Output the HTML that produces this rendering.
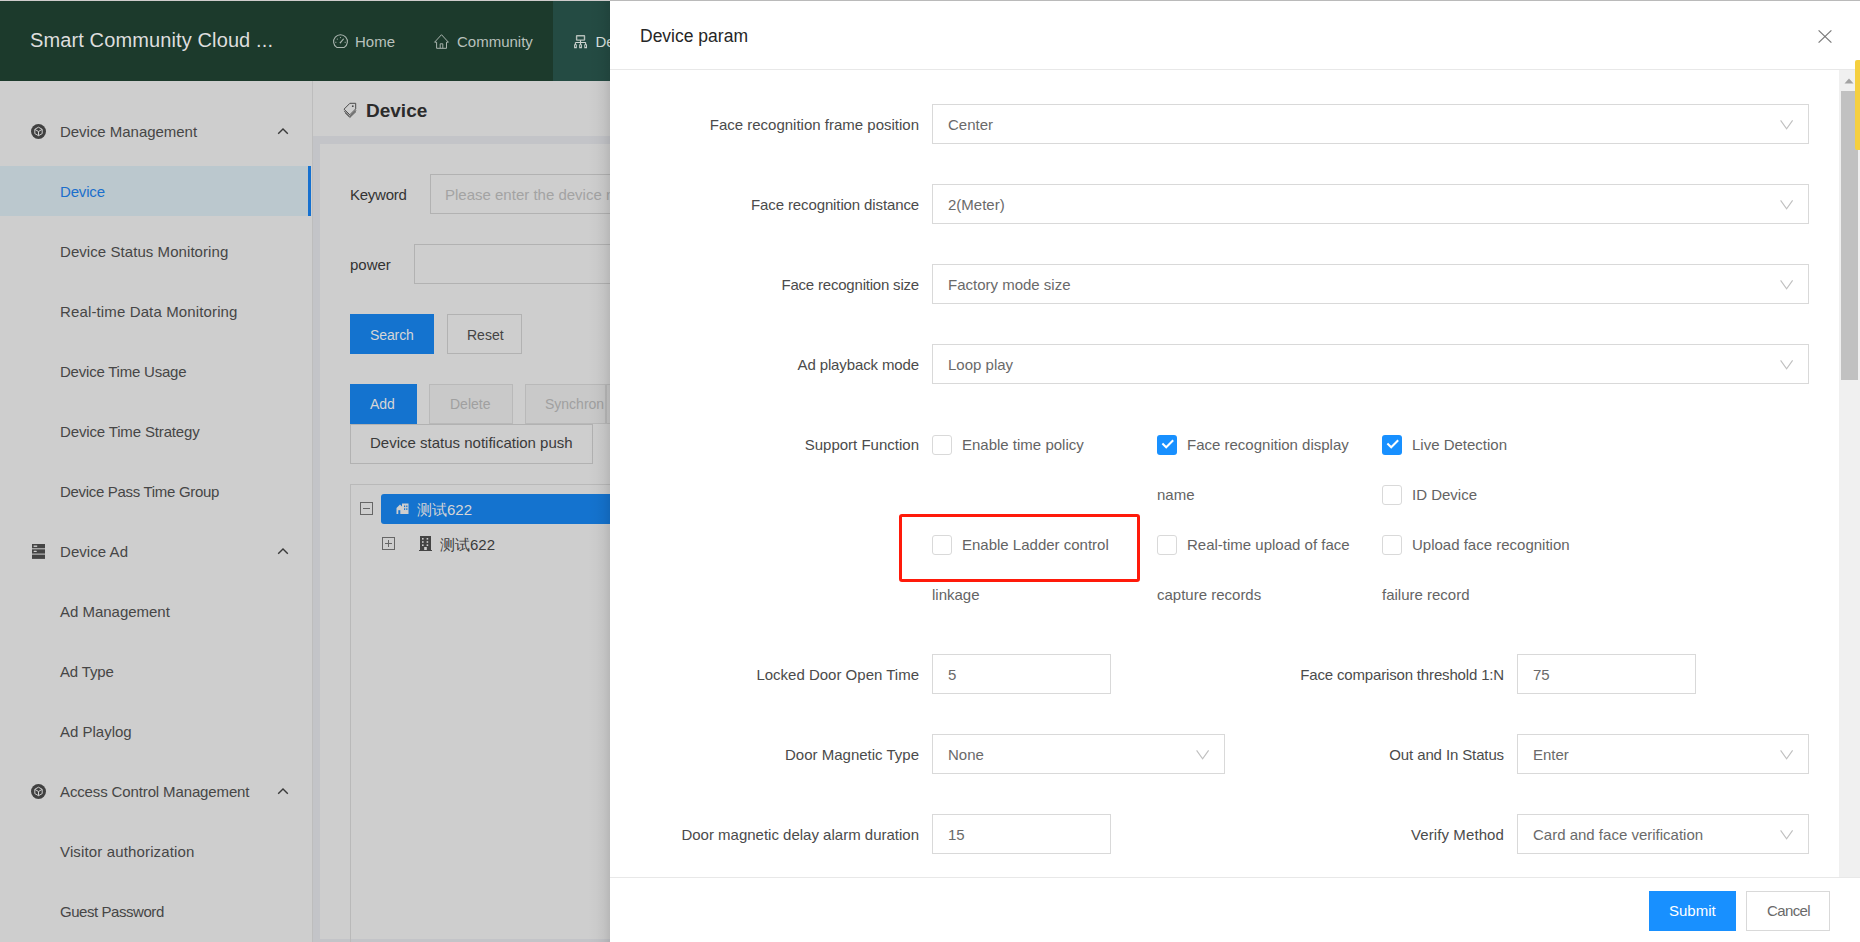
<!DOCTYPE html>
<html><head><meta charset="utf-8">
<style>
*{box-sizing:border-box;margin:0;padding:0}
html,body{width:1860px;height:942px;overflow:hidden;background:#cecece;font-family:"Liberation Sans",sans-serif;position:relative;-webkit-font-smoothing:antialiased}
.a{position:absolute}
.t{position:absolute;white-space:nowrap;line-height:1}
svg{position:absolute;overflow:visible}
</style></head><body>
<div class="a" style="left:0px;top:0px;width:610px;height:81px;background:#1c3a2c"></div>
<div class="a" style="left:553px;top:0px;width:57px;height:81px;background:#244b43"></div>
<div class="t" style="left:30px;top:29.50px;font-size:20px;color:#dedede;font-weight:normal;letter-spacing:0.12px">Smart Community Cloud ...</div>
<div class="t" style="left:355px;top:34.00px;font-size:15px;color:#b9c1bd;font-weight:normal;">Home</div>
<div class="t" style="left:457px;top:34.00px;font-size:15px;color:#b9c1bd;font-weight:normal;">Community</div>
<div class="t" style="left:595.5px;top:34.00px;font-size:15px;color:#d9e1df;font-weight:normal;">De</div>
<svg style="left:333px;top:34px" width="15" height="15" viewBox="0 0 15 15">
<path d="M3.76 13.4 A6.9 6.9 0 1 1 11.24 13.4 Z" fill="none" stroke="#aab5af" stroke-width="1.05"/>
<path d="M7.4 8.6 L10.4 5.1" stroke="#aab5af" stroke-width="1.1" stroke-linecap="round"/>
<circle cx="7.4" cy="8.6" r="0.8" fill="#aab5af"/>
<circle cx="7.5" cy="3.6" r="0.6" fill="#aab5af"/><circle cx="4.3" cy="5.1" r="0.6" fill="#aab5af"/>
<path d="M2.2 8.3 H3.4 M11.6 8.3 H12.8" stroke="#aab5af" stroke-width="0.9"/>
</svg>
<svg style="left:428px;top:28px" width="30" height="24" viewBox="0 0 30 24">
<path d="M8.6 14.2 H6.6 L13.5 6.7 L20.4 14.2 H18.5 V20.3 H8.6 Z" fill="none" stroke="#aab5af" stroke-width="1" stroke-linejoin="miter"/>
<path d="M12.2 20.3 V15.8 H14.8 V20.3" fill="none" stroke="#aab5af" stroke-width="0.95"/>
</svg>
<svg style="left:568px;top:28px" width="30" height="24" viewBox="0 0 30 24">
<rect x="8.6" y="7.7" width="7.9" height="4.4" rx="0.3" fill="none" stroke="#b4bfb9" stroke-width="1.4"/>
<path d="M12.5 12.2 V16.2 M7.4 14.5 H17.8" stroke="#d0d6d2" stroke-width="1.1" fill="none"/>
<path d="M6.6 19.6 V17 Q7.4 15.6 8.3 17 V19.6 Z M11.7 19.6 V17 Q12.5 15.6 13.4 17 V19.6 Z M16.8 19.6 V17 Q17.6 15.6 18.5 17 V19.6 Z" fill="none" stroke="#c8cfcb" stroke-width="1.05"/>
<path d="M7.4 14.5 V16.2 M17.6 14.5 V16.2" stroke="#d0d6d2" stroke-width="1.1"/>
</svg>
<div class="a" style="left:0px;top:81px;width:312px;height:861px;background:#cecece"></div>
<div class="a" style="left:312px;top:81px;width:1px;height:861px;background:#bdbdbd"></div>
<div class="a" style="left:0px;top:166px;width:308px;height:50px;background:#bbc8ce"></div>
<div class="a" style="left:308px;top:166px;width:3px;height:50px;background:#1470d0"></div>
<div class="t" style="left:60px;top:124.00px;font-size:15px;color:#464646;font-weight:normal;letter-spacing:-0.031px">Device Management</div>
<svg style="left:277px;top:127px" width="12" height="8" viewBox="0 0 12 8"><path d="M1.2 6.8 L6 2 L10.8 6.8" fill="none" stroke="#3a3a3a" stroke-width="1.4"/></svg>
<svg style="left:31px;top:123.5px" width="15" height="15" viewBox="0 0 15 15">
<circle cx="7.5" cy="7.5" r="7.5" fill="#404040"/>
<path d="M7.5 3.2 L11.2 5.3 V9.6 L7.5 11.7 L3.8 9.6 V5.3 Z" fill="none" stroke="#cecece" stroke-width="1"/>
<path d="M3.9 5.4 L7.5 7.5 L11.1 5.4 M7.5 7.5 V11.6" fill="none" stroke="#cecece" stroke-width="1"/>
</svg>
<div class="t" style="left:60px;top:184.00px;font-size:15px;color:#1a6fcc;font-weight:normal;letter-spacing:-0.16px">Device</div>
<div class="t" style="left:60px;top:244.00px;font-size:15px;color:#464646;font-weight:normal;letter-spacing:0.065px">Device Status Monitoring</div>
<div class="t" style="left:60px;top:304.00px;font-size:15px;color:#464646;font-weight:normal;letter-spacing:0.133px">Real-time Data Monitoring</div>
<div class="t" style="left:60px;top:364.00px;font-size:15px;color:#464646;font-weight:normal;letter-spacing:-0.219px">Device Time Usage</div>
<div class="t" style="left:60px;top:424.00px;font-size:15px;color:#464646;font-weight:normal;letter-spacing:-0.147px">Device Time Strategy</div>
<div class="t" style="left:60px;top:484.00px;font-size:15px;color:#464646;font-weight:normal;letter-spacing:-0.31px">Device Pass Time Group</div>
<div class="t" style="left:60px;top:544.00px;font-size:15px;color:#464646;font-weight:normal;letter-spacing:0.062px">Device Ad</div>
<svg style="left:277px;top:547px" width="12" height="8" viewBox="0 0 12 8"><path d="M1.2 6.8 L6 2 L10.8 6.8" fill="none" stroke="#3a3a3a" stroke-width="1.4"/></svg>
<svg style="left:32px;top:544px" width="13" height="15" viewBox="0 0 13 15">
<rect x="0" y="0" width="13" height="4.3" fill="#444"/>
<rect x="0" y="5.3" width="13" height="4.3" fill="#444"/>
<rect x="0" y="10.6" width="13" height="4.3" fill="#444"/>
<rect x="1.6" y="1.5" width="3.6" height="1.4" fill="#cecece"/>
<rect x="1.6" y="6.8" width="3.2" height="1.3" rx=".6" fill="#cecece"/>
</svg>
<div class="t" style="left:60px;top:604.00px;font-size:15px;color:#464646;font-weight:normal;letter-spacing:-0.017px">Ad Management</div>
<div class="t" style="left:60px;top:664.00px;font-size:15px;color:#464646;font-weight:normal;letter-spacing:-0.167px">Ad Type</div>
<div class="t" style="left:60px;top:724.00px;font-size:15px;color:#464646;font-weight:normal;letter-spacing:0.0px">Ad Playlog</div>
<div class="t" style="left:60px;top:784.00px;font-size:15px;color:#464646;font-weight:normal;letter-spacing:-0.129px">Access Control Management</div>
<svg style="left:277px;top:787px" width="12" height="8" viewBox="0 0 12 8"><path d="M1.2 6.8 L6 2 L10.8 6.8" fill="none" stroke="#3a3a3a" stroke-width="1.4"/></svg>
<svg style="left:31px;top:783.5px" width="15" height="15" viewBox="0 0 15 15">
<circle cx="7.5" cy="7.5" r="7.5" fill="#404040"/>
<path d="M7.5 3.2 L11.2 5.3 V9.6 L7.5 11.7 L3.8 9.6 V5.3 Z" fill="none" stroke="#cecece" stroke-width="1"/>
<path d="M3.9 5.4 L7.5 7.5 L11.1 5.4 M7.5 7.5 V11.6" fill="none" stroke="#cecece" stroke-width="1"/>
</svg>
<div class="t" style="left:60px;top:844.00px;font-size:15px;color:#464646;font-weight:normal;letter-spacing:0.145px">Visitor authorization</div>
<div class="t" style="left:60px;top:904.00px;font-size:15px;color:#464646;font-weight:normal;letter-spacing:-0.446px">Guest Password</div>
<div class="a" style="left:313px;top:81px;width:297px;height:55px;background:#cecece"></div>
<div class="a" style="left:313px;top:136px;width:297px;height:806px;background:#c3c4c8"></div>
<div class="a" style="left:320px;top:144px;width:290px;height:795px;background:#cecece"></div>
<svg style="left:343px;top:102px" width="15" height="16" viewBox="0 0 15 16">
<path d="M1 7.2 L6.9 1.3 L12.7 1.3 L12.7 6.9 L6.8 12.8 Z" fill="none" stroke="#4a4a4a" stroke-width="1" stroke-linejoin="round"/>
<circle cx="9.8" cy="4.2" r="0.9" fill="#4a4a4a"/>
<path d="M1.2 8.9 L6.8 14.5 L13 8.3" fill="none" stroke="#4a4a4a" stroke-width="1"/>
<path d="M2.2 10.9 L6.8 15.5 L13 9.5" fill="none" stroke="#4a4a4a" stroke-width="0.9"/>
</svg>
<div class="t" style="left:366px;top:101.00px;font-size:19px;color:#2b2b2b;font-weight:bold;">Device</div>
<div class="t" style="left:350px;top:187.00px;font-size:15px;color:#333333;font-weight:normal;letter-spacing:-0.25px">Keyword</div>
<div class="a" style="left:430px;top:174px;width:190px;height:40px;border:1px solid #b2b2b2"></div>
<div class="t" style="left:445px;top:187.00px;font-size:15px;color:#a3a3a3;font-weight:normal;">Please enter the device n</div>
<div class="t" style="left:350px;top:257.00px;font-size:15px;color:#333333;font-weight:normal;">power</div>
<div class="a" style="left:414px;top:244px;width:206px;height:40px;border:1px solid #b2b2b2"></div>
<div class="a" style="left:350px;top:314px;width:84px;height:40px;background:#1473cf"></div>
<div class="t" style="left:370px;top:328.00px;font-size:14px;color:#d6d6d6;font-weight:normal;letter-spacing:-0.1px">Search</div>
<div class="a" style="left:447px;top:314px;width:75px;height:40px;border:1px solid #b2b2b2"></div>
<div class="t" style="left:467px;top:328.00px;font-size:14px;color:#444;font-weight:normal;">Reset</div>
<div class="a" style="left:350px;top:384px;width:67px;height:40px;background:#1473cf"></div>
<div class="t" style="left:370px;top:397.00px;font-size:14px;color:#d6d6d6;font-weight:normal;">Add</div>
<div class="a" style="left:429px;top:384px;width:84px;height:40px;background:#c9c9c9;border:1px solid #b9b9b9"></div>
<div class="t" style="left:450px;top:397.00px;font-size:14px;color:#a0a0a0;font-weight:normal;">Delete</div>
<div class="a" style="left:525px;top:384px;width:81px;height:40px;background:#c9c9c9;border:1px solid #b9b9b9"></div>
<div class="t" style="left:545px;top:397.00px;font-size:14px;color:#a0a0a0;font-weight:normal;">Synchron</div>
<div class="a" style="left:606px;top:384px;width:6px;height:40px;background:#c9c9c9;border:1px solid #b9b9b9"></div>
<div class="a" style="left:350px;top:424px;width:243px;height:40px;border:1px solid #b2b2b2"></div>
<div class="t" style="left:370px;top:434.50px;font-size:15px;color:#3a3a3a;font-weight:normal;">Device status notification push</div>
<div class="a" style="left:350px;top:484px;width:270px;height:458px;border-left:1px solid #b9b9b9;border-top:1px solid #b9b9b9"></div>
<div class="a" style="left:381px;top:494px;width:239px;height:30px;background:#1473cf;border-radius:3px"></div>
<div class="a" style="left:360px;top:502px;width:13px;height:13px;border:1px solid #666666"></div>
<div class="a" style="left:363px;top:508px;width:7px;height:1px;background:#666666"></div>
<svg style="left:396px;top:503px" width="13" height="11" viewBox="0 0 13 11">
<path d="M0.5 5 L4 1.5 L6.5 4 V11 H0.5 Z" fill="#cecece"/>
<rect x="6" y="0.5" width="6.5" height="10.5" fill="#cecece"/>
<rect x="2.3" y="7.2" width="2" height="3.8" fill="#1473cf"/>
<rect x="8" y="2.5" width="1.2" height="1.6" fill="#1473cf"/><rect x="10.2" y="2.5" width="1.2" height="1.6" fill="#1473cf"/>
<rect x="8" y="5.3" width="1.2" height="1.6" fill="#1473cf"/><rect x="10.2" y="5.3" width="1.2" height="1.6" fill="#1473cf"/>
</svg>
<div class="t" style="left:417px;top:502.00px;font-size:15px;color:#d6d6d6;font-weight:normal;">测试622</div>
<div class="a" style="left:382px;top:537px;width:13px;height:13px;border:1px solid #666666"></div>
<div class="a" style="left:385px;top:543px;width:7px;height:1px;background:#666666"></div>
<div class="a" style="left:388px;top:540px;width:1px;height:7px;background:#666666"></div>
<svg style="left:419px;top:536px" width="13" height="15" viewBox="0 0 13 15">
<rect x="1" y="0" width="11" height="14" fill="#444"/>
<rect x="0" y="14" width="13" height="1" fill="#444"/>
<rect x="3" y="2" width="1.6" height="1.6" fill="#cecece"/><rect x="7.6" y="2" width="1.6" height="1.6" fill="#cecece"/>
<rect x="3" y="5.2" width="1.6" height="1.6" fill="#cecece"/><rect x="7.6" y="5.2" width="1.6" height="1.6" fill="#cecece"/>
<rect x="3" y="8.4" width="1.6" height="1.6" fill="#cecece"/><rect x="7.6" y="8.4" width="1.6" height="1.6" fill="#cecece"/>
<rect x="5.2" y="11" width="2.6" height="3" fill="#cecece"/>
</svg>
<div class="t" style="left:440px;top:537.00px;font-size:15px;color:#3a3a3a;font-weight:normal;">测试622</div>
<div class="a" style="left:588px;top:0px;width:22px;height:942px;background:linear-gradient(to right, rgba(0,0,0,0) 0%, rgba(0,0,0,0.02) 40%, rgba(0,0,0,0.05) 70%, rgba(0,0,0,0.11) 100%)"></div>
<div class="a" style="left:610px;top:0px;width:1250px;height:942px;background:#fff"></div>
<div class="a" style="left:0px;top:0px;width:610px;height:1px;background:#cfcccc"></div>
<div class="a" style="left:610px;top:0px;width:1250px;height:1px;background:#bababa"></div>
<div class="t" style="left:640px;top:28.25px;font-size:17.5px;color:#262626;font-weight:normal;">Device param</div>
<svg style="left:1818px;top:30px" width="14" height="13" viewBox="0 0 14 13">
<path d="M0.6 0.4 L13.4 12.6 M13.4 0.4 L0.6 12.6" stroke="#7c7c7c" stroke-width="1.3"/>
</svg>
<div class="a" style="left:610px;top:69px;width:1250px;height:1px;background:#e8e8e8"></div>
<div class="t" style="right:941px;top:117.00px;font-size:15px;color:#4b4b4b;font-weight:normal;">Face recognition frame position</div>
<div class="a" style="left:932px;top:104px;width:877px;height:40px;border:1px solid #d9d9d9"></div>
<div class="t" style="left:948px;top:117.00px;font-size:15px;color:#6a6a6a;font-weight:normal;">Center</div>
<svg style="left:1780px;top:119px" width="14" height="10" viewBox="0 0 14 10"><path d="M0.6 1.3 L6.6 9.8 L12.6 1.3" fill="none" stroke="#c0c0c0" stroke-width="1.15"/></svg>
<div class="t" style="right:941px;top:197.00px;font-size:15px;color:#4b4b4b;font-weight:normal;letter-spacing:-0.12px">Face recognition distance</div>
<div class="a" style="left:932px;top:184px;width:877px;height:40px;border:1px solid #d9d9d9"></div>
<div class="t" style="left:948px;top:197.00px;font-size:15px;color:#6a6a6a;font-weight:normal;">2(Meter)</div>
<svg style="left:1780px;top:199px" width="14" height="10" viewBox="0 0 14 10"><path d="M0.6 1.3 L6.6 9.8 L12.6 1.3" fill="none" stroke="#c0c0c0" stroke-width="1.15"/></svg>
<div class="t" style="right:941px;top:277.00px;font-size:15px;color:#4b4b4b;font-weight:normal;letter-spacing:-0.2px">Face recognition size</div>
<div class="a" style="left:932px;top:264px;width:877px;height:40px;border:1px solid #d9d9d9"></div>
<div class="t" style="left:948px;top:277.00px;font-size:15px;color:#6a6a6a;font-weight:normal;">Factory mode size</div>
<svg style="left:1780px;top:279px" width="14" height="10" viewBox="0 0 14 10"><path d="M0.6 1.3 L6.6 9.8 L12.6 1.3" fill="none" stroke="#c0c0c0" stroke-width="1.15"/></svg>
<div class="t" style="right:941px;top:357.00px;font-size:15px;color:#4b4b4b;font-weight:normal;letter-spacing:-0.12px">Ad playback mode</div>
<div class="a" style="left:932px;top:344px;width:877px;height:40px;border:1px solid #d9d9d9"></div>
<div class="t" style="left:948px;top:357.00px;font-size:15px;color:#6a6a6a;font-weight:normal;">Loop play</div>
<svg style="left:1780px;top:359px" width="14" height="10" viewBox="0 0 14 10"><path d="M0.6 1.3 L6.6 9.8 L12.6 1.3" fill="none" stroke="#c0c0c0" stroke-width="1.15"/></svg>
<div class="t" style="right:941px;top:437.00px;font-size:15px;color:#4b4b4b;font-weight:normal;">Support Function</div>
<div class="a" style="left:932px;top:435px;width:20px;height:20px;border:1px solid #d9d9d9;border-radius:3px;background:#fff"></div>
<div class="t" style="left:962px;top:437.00px;font-size:15px;color:#646464;font-weight:normal;">Enable time policy</div>
<div class="a" style="left:1157px;top:435px;width:20px;height:20px;background:#1890ff;border-radius:3px"></div>
<svg style="left:1157px;top:435px" width="20" height="20" viewBox="0 0 20 20"><path d="M5.4 8.5 L9.2 12.3 L16.2 5.2" fill="none" stroke="#fff" stroke-width="2"/></svg>
<div class="t" style="left:1187px;top:437.00px;font-size:15px;color:#646464;font-weight:normal;">Face recognition display</div>
<div class="a" style="left:1382px;top:435px;width:20px;height:20px;background:#1890ff;border-radius:3px"></div>
<svg style="left:1382px;top:435px" width="20" height="20" viewBox="0 0 20 20"><path d="M5.4 8.5 L9.2 12.3 L16.2 5.2" fill="none" stroke="#fff" stroke-width="2"/></svg>
<div class="t" style="left:1412px;top:437.00px;font-size:15px;color:#646464;font-weight:normal;">Live Detection</div>
<div class="t" style="left:1157px;top:487.00px;font-size:15px;color:#646464;font-weight:normal;">name</div>
<div class="a" style="left:1382px;top:485px;width:20px;height:20px;border:1px solid #d9d9d9;border-radius:3px;background:#fff"></div>
<div class="t" style="left:1412px;top:487.00px;font-size:15px;color:#646464;font-weight:normal;">ID Device</div>
<div class="a" style="left:932px;top:535px;width:20px;height:20px;border:1px solid #d9d9d9;border-radius:3px;background:#fff"></div>
<div class="t" style="left:962px;top:537.00px;font-size:15px;color:#646464;font-weight:normal;">Enable Ladder control</div>
<div class="a" style="left:1157px;top:535px;width:20px;height:20px;border:1px solid #d9d9d9;border-radius:3px;background:#fff"></div>
<div class="t" style="left:1187px;top:537.00px;font-size:15px;color:#646464;font-weight:normal;">Real-time upload of face</div>
<div class="a" style="left:1382px;top:535px;width:20px;height:20px;border:1px solid #d9d9d9;border-radius:3px;background:#fff"></div>
<div class="t" style="left:1412px;top:537.00px;font-size:15px;color:#646464;font-weight:normal;">Upload face recognition</div>
<div class="t" style="left:932px;top:587.00px;font-size:15px;color:#646464;font-weight:normal;">linkage</div>
<div class="t" style="left:1157px;top:587.00px;font-size:15px;color:#646464;font-weight:normal;">capture records</div>
<div class="t" style="left:1382px;top:587.00px;font-size:15px;color:#646464;font-weight:normal;">failure record</div>
<div class="a" style="left:899px;top:514px;width:241px;height:68px;border:3px solid #ff1a0a;border-radius:3px"></div>
<div class="t" style="right:941px;top:667.00px;font-size:15px;color:#4b4b4b;font-weight:normal;">Locked Door Open Time</div>
<div class="a" style="left:932px;top:654px;width:179px;height:40px;border:1px solid #d9d9d9"></div>
<div class="t" style="left:948px;top:667.00px;font-size:15px;color:#6a6a6a;font-weight:normal;">5</div>
<div class="t" style="right:356px;top:667.00px;font-size:15px;color:#4b4b4b;font-weight:normal;letter-spacing:-0.16px">Face comparison threshold 1:N</div>
<div class="a" style="left:1517px;top:654px;width:179px;height:40px;border:1px solid #d9d9d9"></div>
<div class="t" style="left:1533px;top:667.00px;font-size:15px;color:#6a6a6a;font-weight:normal;">75</div>
<div class="t" style="right:941px;top:747.00px;font-size:15px;color:#4b4b4b;font-weight:normal;">Door Magnetic Type</div>
<div class="a" style="left:932px;top:734px;width:293px;height:40px;border:1px solid #d9d9d9"></div>
<div class="t" style="left:948px;top:747.00px;font-size:15px;color:#6a6a6a;font-weight:normal;">None</div>
<svg style="left:1196px;top:749px" width="14" height="10" viewBox="0 0 14 10"><path d="M0.6 1.3 L6.6 9.8 L12.6 1.3" fill="none" stroke="#c0c0c0" stroke-width="1.15"/></svg>
<div class="t" style="right:356px;top:747.00px;font-size:15px;color:#4b4b4b;font-weight:normal;letter-spacing:-0.12px">Out and In Status</div>
<div class="a" style="left:1517px;top:734px;width:292px;height:40px;border:1px solid #d9d9d9"></div>
<div class="t" style="left:1533px;top:747.00px;font-size:15px;color:#6a6a6a;font-weight:normal;">Enter</div>
<svg style="left:1780px;top:749px" width="14" height="10" viewBox="0 0 14 10"><path d="M0.6 1.3 L6.6 9.8 L12.6 1.3" fill="none" stroke="#c0c0c0" stroke-width="1.15"/></svg>
<div class="t" style="right:941px;top:827.00px;font-size:15px;color:#4b4b4b;font-weight:normal;">Door magnetic delay alarm duration</div>
<div class="a" style="left:932px;top:814px;width:179px;height:40px;border:1px solid #d9d9d9"></div>
<div class="t" style="left:948px;top:827.00px;font-size:15px;color:#6a6a6a;font-weight:normal;">15</div>
<div class="t" style="right:356px;top:827.00px;font-size:15px;color:#4b4b4b;font-weight:normal;letter-spacing:0.1px">Verify Method</div>
<div class="a" style="left:1517px;top:814px;width:292px;height:40px;border:1px solid #d9d9d9"></div>
<div class="t" style="left:1533px;top:827.00px;font-size:15px;color:#6a6a6a;font-weight:normal;">Card and face verification</div>
<svg style="left:1780px;top:829px" width="14" height="10" viewBox="0 0 14 10"><path d="M0.6 1.3 L6.6 9.8 L12.6 1.3" fill="none" stroke="#c0c0c0" stroke-width="1.15"/></svg>
<div class="a" style="left:1839px;top:70px;width:21px;height:807px;background:#f0f0f0"></div>
<svg style="left:1844px;top:78px" width="10" height="6" viewBox="0 0 10 6"><path d="M0.5 5.5 L5 0.5 L9.5 5.5 Z" fill="#a3a3a3"/></svg>
<div class="a" style="left:1841px;top:91px;width:17px;height:289px;background:#c1c1c1"></div>
<div class="a" style="left:1855px;top:60px;width:6px;height:90px;background:#f5cf3f;border-radius:2px 0 0 2px"></div>
<div class="a" style="left:610px;top:877px;width:1250px;height:1px;background:#e8e8e8"></div>
<div class="a" style="left:1649px;top:891px;width:87px;height:40px;background:#1890ff"></div>
<div class="t" style="left:1669px;top:903.00px;font-size:15px;color:#ffffff;font-weight:normal;">Submit</div>
<div class="a" style="left:1746px;top:891px;width:84px;height:40px;border:1px solid #d9d9d9"></div>
<div class="t" style="left:1767px;top:903.00px;font-size:15px;color:#6a6a6a;font-weight:normal;letter-spacing:-0.6px">Cancel</div>
</body></html>
